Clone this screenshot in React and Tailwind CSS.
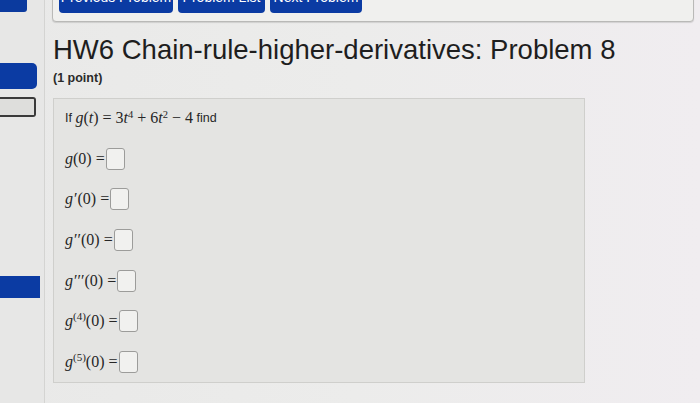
import React from 'react';

const serif = { fontFamily: '"Liberation Serif", "DejaVu Serif", serif' };

function V({ children }) {
  return <span className="italic">{children}</span>;
}

function Op({ children }) {
  return <span className="mx-[4px]">{children}</span>;
}

function AnswerBox() {
  return <span className="inline-block h-[22px] w-[19px] rounded-[3px] border-[1.5px] border-[#9c9c9a] bg-[#f1f1ef]" />;
}

function Row({ children }) {
  return (
    <div className="flex h-[22px] items-center text-[16px] text-[#262626]" style={serif}>
      {children}
      <span className="ml-[4px] mr-[1px]">=</span>
      <AnswerBox />
    </div>
  );
}

function Sidebar() {
  return (
    <div className="relative w-[45px] shrink-0 border-r border-[#d4d4d2] bg-[#e7e7e6]">
      <div className="h-[12px] w-[27px] rounded-br-[3px] bg-[#0b3a9e]" />
      <div className="mt-[51px] h-[26px] w-[37px] rounded-r-[5px] bg-[#0b3ba3]" />
      <div className="mt-[8px] h-[20px] w-[36px] rounded-r-[3px] border-2 border-l-0 border-[#3a3a3a] bg-[#dededc]" />
      <div className="mt-[159px] h-[22px] w-[40px] bg-[#0b3ba3]" />
    </div>
  );
}

function Toolbar() {
  const btn = 'flex h-[28px] items-end justify-center rounded-[4px] bg-[#0b3ba3] pb-[9px] text-[14px] leading-none text-white';
  return (
    <div className="ml-[7px] mr-[6px] mt-[-16px] flex gap-[5px] rounded-b-[4px] border border-[#b9b9b7] bg-[#f0f0ee] px-[6px] pb-[8px] shadow-[0_1px_1px_rgba(0,0,0,0.12)]">
      <div className={btn + ' w-[114px]'}>Previous Problem</div>
      <div className={btn + ' w-[87px]'}>Problem List</div>
      <div className={btn + ' w-[92px]'}>Next Problem</div>
    </div>
  );
}

export default function App() {
  return (
    <div
      className="flex h-[403px] w-[700px] overflow-hidden bg-gradient-to-r from-[#e9e9e8] via-[#ececeb] to-[#f0edf0]"
      style={{ fontFamily: '"Liberation Sans", Arial, sans-serif' }}
    >
      <Sidebar />
      <main className="flex-1">
        <Toolbar />
        <h1 className="ml-[8px] mt-[12px] text-[27.5px] leading-[32px] text-[#1e1e1e]">
          HW6 Chain-rule-higher-derivatives: Problem 8
        </h1>
        <div className="ml-[8px] mt-[4px] text-[12.5px] font-bold leading-[16px] text-[#2a2a2a]">(1 point)</div>
        <div className="ml-[8px] mt-[12px] h-[285px] w-[532px] border border-[#cfcfcc] bg-[#e4e4e2] pl-[11px] pt-[8px]">
          <div className="flex flex-col gap-[18.7px]">
            <div className="flex h-[22px] items-center text-[12.5px] text-[#262626]">
              <span>If&nbsp;</span>
              <span className="text-[16px]" style={serif}>
                <V>g</V>(<V>t</V>)<Op>=</Op>3<V>t</V>
                <sup className="text-[10.5px]">4</sup>
                <Op>+</Op>6<V>t</V>
                <sup className="text-[10.5px]">2</sup>
                <Op>−</Op>4
              </span>
              <span>&nbsp;find</span>
            </div>
            <Row>
              <V>g</V>(0)
            </Row>
            <Row>
              <V>g</V>
              <span className="ml-[1px]">′</span>(0)
            </Row>
            <Row>
              <V>g</V>
              <span className="ml-[1px]">′′</span>(0)
            </Row>
            <Row>
              <V>g</V>
              <span className="ml-[1px]">′′′</span>(0)
            </Row>
            <Row>
              <V>g</V>
              <sup className="text-[11px]">(4)</sup>(0)
            </Row>
            <Row>
              <V>g</V>
              <sup className="text-[11px]">(5)</sup>(0)
            </Row>
          </div>
        </div>
      </main>
    </div>
  );
}
